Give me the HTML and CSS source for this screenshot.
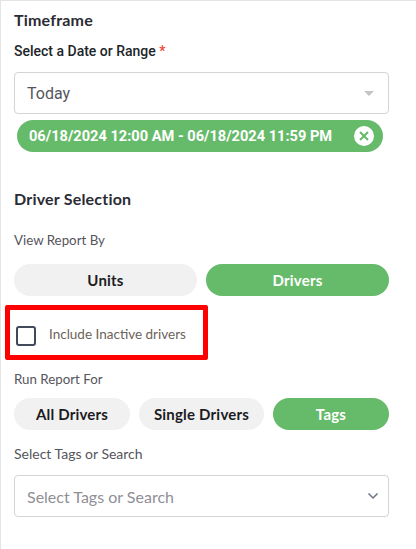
FILE: index.html
```html
<!DOCTYPE html>
<html lang="en">
<head>
    <link rel="stylesheet" href="styles.css">
</head>
<body>
    <div class="panel">
        <h2 class="section-title">Timeframe</h2>
        <div class="date-label">Select a Date or Range <span class="required">*</span></div>

        <div class="select select-date">
            <span>Today</span>
            <span class="caret"></span>
        </div>

        <div class="chip">
            <span>06/18/2024 12:00 AM - 06/18/2024 11:59 PM</span>
            <svg class="chip-close" width="20" height="20" viewBox="0 0 20 20">
                <circle cx="10" cy="10" r="10" fill="#fff"/>
                <path d="M6 6l8 8M14 6l-8 8" stroke="#66bb6a" stroke-width="2" fill="none"/>
            </svg>
        </div>

        <h2 class="section-title driver-title">Driver Selection</h2>
        <div class="field-label view-label">View Report By</div>

        <div class="toggle-row toggle-view">
            <div class="toggle">Units</div>
            <div class="toggle active">Drivers</div>
        </div>

        <div class="check-row">
            <div class="highlight"></div>
            <span class="checkbox"></span>
            <span class="check-text">Include Inactive drivers</span>
        </div>

        <div class="field-label run-label">Run Report For</div>

        <div class="toggle-row toggle-run">
            <div class="toggle">All Drivers</div>
            <div class="toggle">Single Drivers</div>
            <div class="toggle active">Tags</div>
        </div>

        <div class="field-label tags-label">Select Tags or Search</div>

        <div class="select select-tags">
            <span>Select Tags or Search</span>
            <svg class="chevron" width="12" height="8" viewBox="0 0 12 8">
                <path d="M1.5 1.5L6 6l4.5-4.5" stroke="#6b7280" stroke-width="1.5" fill="none"/>
            </svg>
        </div>
    </div>
</body>
</html>
```

FILE: styles.css
```css
* {
    box-sizing: border-box;
}

body {
    margin: 0;
    background: white;
    font-family: 'Lato', sans-serif;
    color: #212529;
}

.panel {
    width: 416px;
    height: 549px;
    padding: 11px 27px 0 13px;
    border-top: 1px solid #e4e4e4;
    border-left: 1px solid #e4e4e4;
    overflow: hidden;
}

.section-title {
    margin: 0;
    font-size: 16px;
    line-height: 16px;
    font-weight: 700;
    letter-spacing: 0.2px;
    color: #2b2b33;
}

.date-label {
    margin-top: 15px;
    font-family: 'Roboto', sans-serif;
    font-size: 14px;
    line-height: 16px;
    font-weight: 500;
    color: #212529;
}

.required {
    color: #f44336;
}

.select {
    display: flex;
    align-items: center;
    justify-content: space-between;
    height: 42px;
    padding: 0 12px;
    background: white;
    border: 1px solid #d4d4d8;
    border-radius: 4px;
}

.select-date {
    margin-top: 13px;
    font-family: 'Roboto', sans-serif;
    font-size: 16px;
    color: #55555c;
}

.caret {
    width: 0;
    height: 0;
    margin-right: 2px;
    border-left: 5px solid transparent;
    border-right: 5px solid transparent;
    border-top: 5px solid #c4c4c4;
}

.chip {
    display: flex;
    align-items: center;
    justify-content: space-between;
    width: 366px;
    height: 32px;
    margin: 6px 0 0 3px;
    padding: 0 9px 0 12px;
    background: #66bb6a;
    border-radius: 16px;
    font-family: 'Roboto', sans-serif;
    font-size: 14.6px;
    font-weight: 700;
    color: white;
}

.driver-title {
    margin-top: 39px;
}

.field-label {
    font-size: 13.3px;
    line-height: 16px;
    color: #55555c;
}

.view-label {
    margin-top: 25px;
}

.toggle-row {
    display: flex;
    gap: 9px;
    margin-top: 16px;
}

.toggle {
    height: 32px;
    line-height: 32px;
    text-align: center;
    background: #f1f1f1;
    border-radius: 16px;
    font-size: 15px;
    font-weight: 700;
    letter-spacing: 0.2px;
    color: #1c1c22;
}

.toggle.active {
    background: #66bb6a;
    color: white;
}

.toggle-view .toggle {
    width: 183px;
}

.toggle-run .toggle:nth-child(1) {
    width: 116px;
}

.toggle-run .toggle:nth-child(2) {
    width: 125px;
}

.toggle-run .toggle:nth-child(3) {
    width: 116px;
}

.check-row {
    position: relative;
    display: flex;
    align-items: center;
    gap: 13px;
    height: 20px;
    margin: 30px 0 0 2px;
}

.highlight {
    position: absolute;
    left: -11px;
    top: -21px;
    width: 203px;
    height: 55px;
    border: 5px solid #ff0000;
    border-radius: 2px;
}

.checkbox {
    width: 20px;
    height: 20px;
    border: 2px solid #3f4a5a;
    border-radius: 3px;
}

.check-text {
    margin-bottom: 4px;
    font-size: 13.5px;
    color: #6b6259;
}

.run-label {
    margin-top: 25px;
}

.toggle-run {
    margin-top: 11px;
}

.tags-label {
    margin-top: 16px;
    font-size: 14px;
}

.select-tags {
    margin-top: 13px;
    font-size: 16px;
    color: #8f8f96;
}

.chevron {
    margin-right: -3px;
}
```
